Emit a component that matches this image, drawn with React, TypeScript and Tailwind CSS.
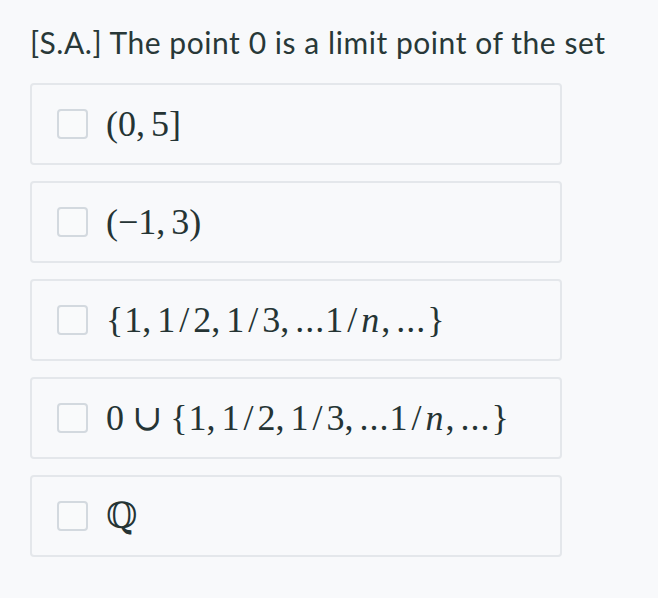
import React from "react";

const serif = { fontFamily: '"Liberation Serif", "DejaVu Serif", serif' };

function Box({ children }: { children: React.ReactNode }) {
  return (
    <div className="flex h-[82px] items-center rounded-[4px] border-2 border-[#e4e7eb] pl-[25px]">
      <div className="h-[30px] w-[31px] shrink-0 rounded-[4px] border-2 border-[#d3d9df] bg-[#f9fafb]" />
      <div
        className="ml-[18px] flex items-baseline whitespace-nowrap text-[36px] leading-none text-[#253434]"
        style={serif}
      >
        {children}
      </div>
    </div>
  );
}

function C() {
  return <span className="mr-[6px]">,</span>;
}
function S() {
  return <span className="mx-[4px]">/</span>;
}
function D() {
  return <span className="tracking-[1px]">...</span>;
}

function SetSeq() {
  return (
    <>
      <span className="mr-[1px]">{"{"}</span>1<C />1<S />2<C />1<S />3<C />
      <D />1<S />
      <i className="mr-[2px]">n</i>
      <C />
      <D />
      <span className="ml-[1px]">{"}"}</span>
    </>
  );
}

export default function App() {
  return (
    <div
      className="min-h-screen bg-[#f8f9fb] px-[30px] pt-[22px]"
      style={{ fontFamily: 'Lato, "Open Sans", sans-serif' }}
    >
      <h1 className="text-[30px] leading-[40px] font-normal tracking-[0.55px] text-[#283838]">
        [S.A.] The point 0 is a limit point of the set
      </h1>
      <div className="mt-[21px] flex w-[532px] flex-col gap-4">
        <Box>
          (0<C />5]
        </Box>
        <Box>
          (−1<C />3)
        </Box>
        <Box>
          <SetSeq />
        </Box>
        <Box>
          0<span className="mx-[8px]">∪</span>
          <SetSeq />
        </Box>
        <Box>
          <span style={{ fontFamily: '"DejaVu Serif", serif' }}>ℚ</span>
        </Box>
      </div>
    </div>
  );
}
